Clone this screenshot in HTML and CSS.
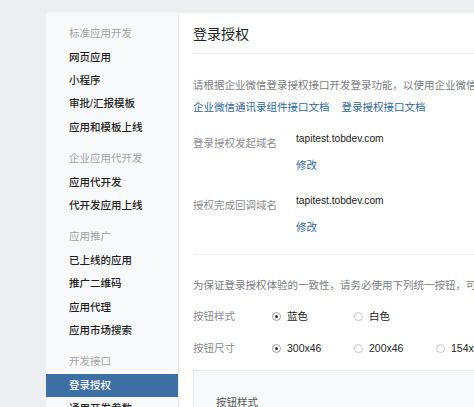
FILE: index.html
```html
<!DOCTYPE html>
<html lang="zh-CN">
<head>
<meta charset="utf-8">
<title>登录授权</title>
<link rel="stylesheet" href="styles.css">
</head>
<body>
<div class="page">
  <aside class="sidebar">
    <div class="group">
      <div class="group-title">标准应用开发</div>
      <div class="item">网页应用</div>
      <div class="item">小程序</div>
      <div class="item">审批/汇报模板</div>
      <div class="item">应用和模板上线</div>
    </div>
    <div class="group">
      <div class="group-title">企业应用代开发</div>
      <div class="item">应用代开发</div>
      <div class="item">代开发应用上线</div>
    </div>
    <div class="group">
      <div class="group-title">应用推广</div>
      <div class="item">已上线的应用</div>
      <div class="item">推广二维码</div>
      <div class="item">应用代理</div>
      <div class="item">应用市场搜索</div>
    </div>
    <div class="group">
      <div class="group-title">开发接口</div>
      <div class="item active">登录授权</div>
      <div class="item">通用开发参数</div>
    </div>
  </aside>
  <main class="main">
    <header class="header"><h1 class="title">登录授权</h1></header>
    <section class="section">
      <p class="desc">请根据企业微信登录授权接口开发登录功能，以使用企业微信账号登录你的网站。</p>
      <div class="links">
        <a class="link">企业微信通讯录组件接口文档</a>
        <a class="link">登录授权接口文档</a>
      </div>
      <div class="field">
        <div class="label">登录授权发起域名</div>
        <div class="value">
          <div class="domain">tapitest.tobdev.com</div>
          <a class="link edit">修改</a>
        </div>
      </div>
      <div class="field">
        <div class="label">授权完成回调域名</div>
        <div class="value">
          <div class="domain">tapitest.tobdev.com</div>
          <a class="link edit">修改</a>
        </div>
      </div>
    </section>
    <section class="section second">
      <p class="desc">为保证登录授权体验的一致性，请务必使用下列统一按钮，可根据需要选择样式和尺寸。</p>
      <div class="opt-row">
        <div class="label">按钮样式</div>
        <div class="opts">
          <label class="radio"><span class="dot checked"></span>蓝色</label>
          <label class="radio"><span class="dot"></span>白色</label>
        </div>
      </div>
      <div class="opt-row">
        <div class="label">按钮尺寸</div>
        <div class="opts">
          <label class="radio"><span class="dot checked"></span>300x46</label>
          <label class="radio"><span class="dot"></span>200x46</label>
          <label class="radio"><span class="dot"></span>154x36</label>
        </div>
      </div>
      <div class="preview">
        <div class="preview-label">按钮样式</div>
      </div>
    </section>
  </main>
</div>
</body>
</html>
```
FILE: styles.css
```css
* { box-sizing: border-box; }
html, body {
  margin: 0;
  height: 100%;
  overflow: hidden;
}
body {
  background: #eceef1;
  font-family: "Liberation Sans", "Noto Sans CJK SC", sans-serif;
  font-size: 10.5px;
  color: #222;
}
.page {
  display: flex;
  padding: 13px 0 0 46px;
  height: 100%;
}
.sidebar {
  width: 132px;
  flex: none;
  background: #f8f9fb;
  padding-top: 9.3px;
}
.group + .group { margin-top: 8px; }
.group-title {
  height: 23.4px;
  line-height: 23.4px;
  padding-left: 23px;
  color: #a3a5a8;
}
.item {
  height: 23.4px;
  line-height: 23.4px;
  padding-left: 23px;
  color: #1f1f1f;
  font-weight: 500;
}
.item.active {
  background: #3d6ea4;
  color: #fff;
}
.main {
  flex: 1;
  margin-left: 1px;
  background: #fff;
  padding-left: 14px;
  overflow: hidden;
  white-space: nowrap;
}
.header {
  height: 41px;
  display: flex;
  align-items: center;
  border-bottom: 1px solid #e6e8eb;
  padding-bottom: 1px;
}
.title {
  margin: 0;
  font-size: 14px;
  font-weight: normal;
  color: #222;
}
.section {
  padding: 20px 0 16px;
  border-bottom: 1px solid #eceef0;
}
.section.second {
  border-bottom: none;
  padding-top: 19px;
}
.desc {
  margin: 0;
  line-height: 22px;
  color: #7c7e82;
}
.links {
  display: flex;
  gap: 12px;
  line-height: 22px;
  margin-bottom: 10px;
}
.link {
  color: #2e67a0;
  text-decoration: none;
}
.field {
  display: flex;
}
.field + .field { margin-top: 14px; }
.label {
  width: 103px;
  flex: none;
  color: #8a8c90;
  line-height: 22px;
}
.field .label { padding-top: 4px; }
.value {
  display: flex;
  flex-direction: column;
  gap: 4px;
}
.domain {
  line-height: 22px;
  font-size: 10.2px;
  color: #222;
}
.edit { line-height: 22px; }
.opt-row {
  display: flex;
  margin-top: 9px;
}
.opt-row + .opt-row { margin-top: 10px; }
.opt-row .label { width: 79px; }
.opts {
  display: flex;
  line-height: 22px;
}
.radio {
  display: flex;
  align-items: center;
  width: 82px;
  color: #222;
}
.dot {
  width: 9px;
  height: 9px;
  border-radius: 50%;
  border: 1px solid #c3c5c8;
  margin-right: 6px;
  position: relative;
  flex: none;
}
.dot.checked { border-color: #9a9c9f; }
.dot.checked::after {
  content: "";
  position: absolute;
  left: 2px;
  top: 2px;
  width: 3px;
  height: 3px;
  border-radius: 50%;
  background: #333;
}
.preview {
  margin-top: 11px;
  height: 80px;
  background: #f8f9fa;
  border: 1px solid #e8eaed;
  border-right: none;
  padding: 20px 0 0 22px;
}
.preview-label {
  line-height: 22px;
  color: #555;
}
```
